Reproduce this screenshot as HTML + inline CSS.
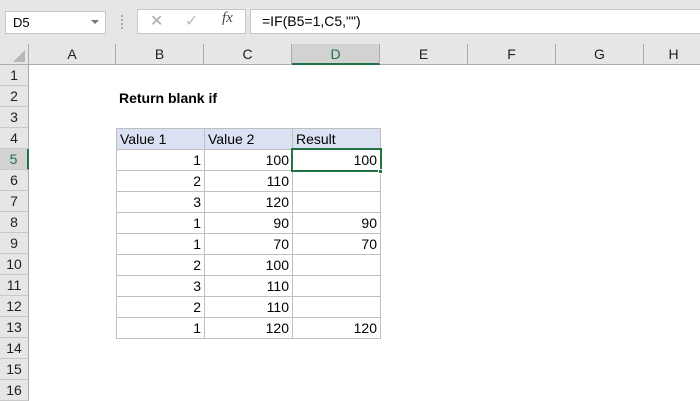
<!DOCTYPE html>
<html><head><style>
*{margin:0;padding:0;box-sizing:border-box}
body{width:700px;height:400px;overflow:hidden;background:#fff;font-family:"Liberation Sans",Calibri,sans-serif;position:relative}
.a{position:absolute}
.tb{left:0;top:0;width:700px;height:44px;background:#e6e6e6}
.box{background:#fff;border:1px solid #c6c6c6}
.ch{top:44px;height:21px;background:#e6e6e6;border-right:1px solid #ababab;border-bottom:1px solid #ababab;text-align:center;font-size:14px;line-height:21px;color:#222}
.rh{left:0;width:29px;height:21px;background:#e6e6e6;border-right:1px solid #ababab;border-bottom:1px solid #c8c8c8;text-align:center;font-size:14px;line-height:21px;color:#222}
.c{height:22px;border:1px solid #bfbfbf;font-size:14px;line-height:20px;padding:0 3px;text-align:right;color:#000}
.h{background:#d9e1f2;text-align:left}
</style></head><body>
<div class="a tb"></div>
<div class="a box" style="left:5px;top:11px;width:101px;height:23px;font-size:13px;line-height:21px;padding-left:7px">D5</div>
<div class="a" style="left:91px;top:20px;width:0;height:0;border-left:4px solid transparent;border-right:4px solid transparent;border-top:4px solid #777"></div>
<div class="a" style="left:121px;top:15px;width:2px;height:14px;border-left:2px dotted #aaa"></div>
<div class="a box" style="left:137px;top:9px;width:109px;height:25px"></div>
<div class="a" style="left:150px;top:11px;font-size:16px;color:#aaa">✕</div>
<div class="a" style="left:185px;top:11px;font-size:16px;color:#bbb">✓</div>
<div class="a" style="left:222px;top:10px;font-size:15px;font-style:italic;font-family:'Liberation Serif',serif;color:#444">fx</div>
<div class="a box" style="left:250px;top:9px;width:460px;height:25px;font-size:14px;line-height:23px;padding-left:11px">=IF(B5=1,C5,"")</div>
<div class="a" style="left:0;top:44px;width:29px;height:21px;background:#e6e6e6;border-right:1px solid #ababab;border-bottom:1px solid #ababab"></div>
<div class="a" style="left:13px;top:50px;width:0;height:0;border-left:12px solid transparent;border-bottom:12px solid #b8b8b8"></div>
<div class="a ch" style="left:29px;width:87px">A</div>
<div class="a ch" style="left:116px;width:88px">B</div>
<div class="a ch" style="left:204px;width:88px">C</div>
<div class="a ch" style="left:292px;width:88px;background:#d2d2d2;border-bottom:2px solid #217346;color:#217346">D</div>
<div class="a ch" style="left:380px;width:88px">E</div>
<div class="a ch" style="left:468px;width:88px">F</div>
<div class="a ch" style="left:556px;width:88px">G</div>
<div class="a ch" style="left:644px;width:60px">H</div>
<div class="a rh" style="top:65px">1</div>
<div class="a rh" style="top:86px">2</div>
<div class="a rh" style="top:107px">3</div>
<div class="a rh" style="top:128px">4</div>
<div class="a rh" style="top:149px;background:#d2d2d2;border-right:2px solid #217346;color:#217346">5</div>
<div class="a rh" style="top:170px">6</div>
<div class="a rh" style="top:191px">7</div>
<div class="a rh" style="top:212px">8</div>
<div class="a rh" style="top:233px">9</div>
<div class="a rh" style="top:254px">10</div>
<div class="a rh" style="top:275px">11</div>
<div class="a rh" style="top:296px">12</div>
<div class="a rh" style="top:317px">13</div>
<div class="a rh" style="top:338px">14</div>
<div class="a rh" style="top:359px">15</div>
<div class="a rh" style="top:380px">16</div>
<div class="a" style="left:119px;top:88px;font-size:14px;font-weight:bold;line-height:20px">Return blank if</div>

<div class="a c h" style="left:116px;top:128px;width:89px">Value 1</div>
<div class="a c h" style="left:204px;top:128px;width:89px">Value 2</div>
<div class="a c h" style="left:292px;top:128px;width:89px">Result</div>

<div class="a c" style="left:116px;top:149px;width:89px">1</div><div class="a c" style="left:204px;top:149px;width:89px">100</div><div class="a c" style="left:292px;top:149px;width:89px">100</div>
<div class="a c" style="left:116px;top:170px;width:89px">2</div><div class="a c" style="left:204px;top:170px;width:89px">110</div><div class="a c" style="left:292px;top:170px;width:89px"></div>
<div class="a c" style="left:116px;top:191px;width:89px">3</div><div class="a c" style="left:204px;top:191px;width:89px">120</div><div class="a c" style="left:292px;top:191px;width:89px"></div>
<div class="a c" style="left:116px;top:212px;width:89px">1</div><div class="a c" style="left:204px;top:212px;width:89px">90</div><div class="a c" style="left:292px;top:212px;width:89px">90</div>
<div class="a c" style="left:116px;top:233px;width:89px">1</div><div class="a c" style="left:204px;top:233px;width:89px">70</div><div class="a c" style="left:292px;top:233px;width:89px">70</div>
<div class="a c" style="left:116px;top:254px;width:89px">2</div><div class="a c" style="left:204px;top:254px;width:89px">100</div><div class="a c" style="left:292px;top:254px;width:89px"></div>
<div class="a c" style="left:116px;top:275px;width:89px">3</div><div class="a c" style="left:204px;top:275px;width:89px">110</div><div class="a c" style="left:292px;top:275px;width:89px"></div>
<div class="a c" style="left:116px;top:296px;width:89px">2</div><div class="a c" style="left:204px;top:296px;width:89px">110</div><div class="a c" style="left:292px;top:296px;width:89px"></div>
<div class="a c" style="left:116px;top:317px;width:89px">1</div><div class="a c" style="left:204px;top:317px;width:89px">120</div><div class="a c" style="left:292px;top:317px;width:89px">120</div>

<div class="a" style="left:291px;top:148px;width:91px;height:24px;border:2px solid #217346"></div>
<div class="a" style="left:378px;top:169px;width:5px;height:5px;background:#217346;border:1px solid #fff"></div>
</body></html>
